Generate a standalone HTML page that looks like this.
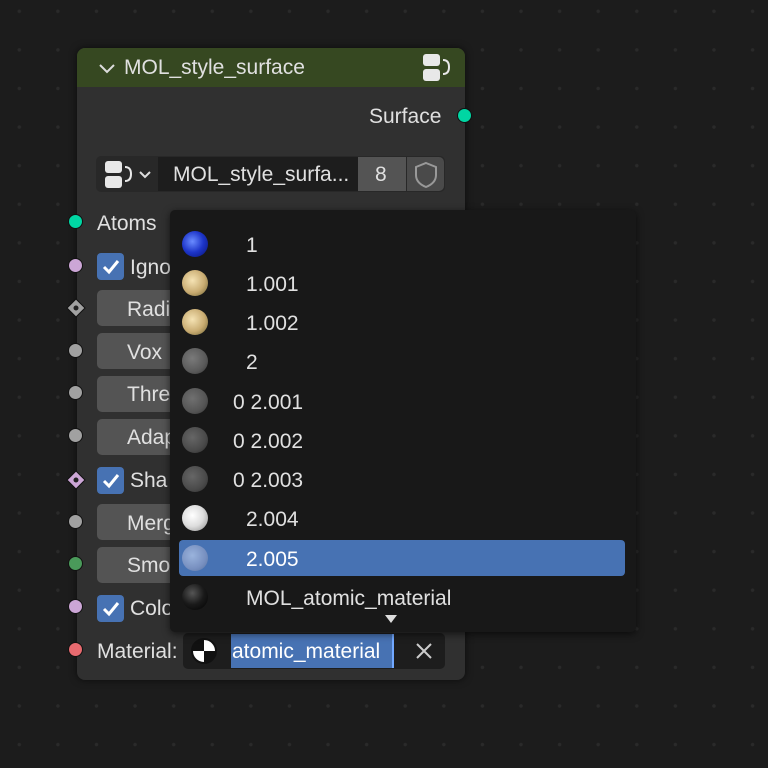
<!DOCTYPE html>
<html><head><style>
*{margin:0;padding:0;box-sizing:border-box}
body{width:768px;height:768px;overflow:hidden;background:#1c1c1c;font-family:"Liberation Sans","DejaVu Sans",sans-serif;color:#e0e0e0;position:relative;
background-image:radial-gradient(circle,#2a2a2a 1.5px,transparent 2px);background-size:38.6px 38.6px;background-position:0px -8px}
.abs{position:absolute}
.node{left:77px;top:48px;width:388px;height:632px;background:#303030;border-radius:8px;box-shadow:0 0 8px rgba(0,0,0,.6)}
.hdr{left:77px;top:48px;width:388px;height:39px;background:#364821;border-radius:8px 8px 0 0}
.t{font-size:21px;white-space:nowrap;margin-top:1px}
.sock{width:15px;height:15px;border-radius:50%;border:1px solid #111}
.btn{left:97px;width:90px;height:36px;background:#545454;border-radius:5px}
.cb{left:97px;width:27px;height:27px;background:#4772b3;border-radius:4px}
.pop{left:170px;top:210px;width:466px;height:422px;background:#181818;border-radius:5px;box-shadow:0 2px 8px rgba(0,0,0,.6)}
.sp{width:26px;height:26px;border-radius:50%;left:182px}
</style></head><body>
<div class="abs node"></div>
<div class="abs hdr"></div>
<svg class="abs" style="left:97px;top:58px" width="20" height="20"><path d="M3 7l7 7 7-7" stroke="#ddd" stroke-width="2" fill="none"/></svg>
<div class="abs t" style="left:124px;top:55px">MOL_style_surface</div>
<svg class="abs" style="left:420px;top:52px" width="34" height="32"><rect x="3" y="2" width="17" height="12" rx="3" fill="#e8e8e8"/><rect x="3" y="17" width="17" height="12" rx="3" fill="#e8e8e8"/><path d="M23 8q6 0 6 7t-6 7" stroke="#e8e8e8" stroke-width="2" fill="none"/></svg>
<div class="abs t" style="left:369px;top:104px">Surface</div>
<div class="abs sock" style="left:457px;top:108px;background:#00d6a3"></div>
<div class="abs" style="left:96px;top:156px;width:349px;height:36px;background:#282828;border-radius:5px"></div>
<div class="abs" style="left:158px;top:157px;width:200px;height:34px;background:#1d1d1d"></div>
<div class="abs" style="left:358px;top:157px;width:48px;height:34px;background:#545454"></div>
<div class="abs" style="left:407px;top:157px;width:37px;height:34px;background:#4a4a4a;border-radius:0 5px 5px 0"></div>
<svg class="abs" style="left:102px;top:159px" width="56" height="32"><rect x="3" y="2" width="17" height="12" rx="3" fill="#e8e8e8"/><rect x="3" y="17" width="17" height="12" rx="3" fill="#e8e8e8"/><path d="M23 8q6 0 6 7t-6 7" stroke="#e8e8e8" stroke-width="2" fill="none"/><path d="M38 13l5 5 5-5" stroke="#ddd" stroke-width="2" fill="none"/></svg>
<div class="abs t" style="left:173px;top:162px">MOL_style_surfa...</div>
<div class="abs t" style="left:375px;top:162px">8</div>
<svg class="abs" style="left:412px;top:160px" width="28" height="30"><path d="M14 3l10 4v8q0 8-10 12q-10-4-10-12V7z" stroke="#999" stroke-width="2" fill="none"/></svg>
<div class="abs sock" style="left:68px;top:214px;background:#00d6a3"></div>
<div class="abs t" style="left:97px;top:211px">Atoms</div>
<div class="abs sock" style="left:68px;top:258px;background:#cca6d6"></div>
<div class="abs cb" style="top:253px"></div><div class="abs t" style="left:130px;top:255px">Igno</div>
<svg class="abs" style="left:66px;top:298px" width="20" height="20"><path d="M10 1l9 9-9 9-9-9z" fill="#a1a1a1" stroke="#111"/><circle cx="10" cy="10" r="2.5" fill="#222"/></svg>
<div class="abs btn" style="top:290px"></div><div class="abs t" style="left:127px;top:297px">Radi</div>
<div class="abs sock" style="left:68px;top:343px;background:#a1a1a1"></div>
<div class="abs btn" style="top:333px"></div><div class="abs t" style="left:127px;top:340px">Vox</div>
<div class="abs sock" style="left:68px;top:385px;background:#a1a1a1"></div>
<div class="abs btn" style="top:376px"></div><div class="abs t" style="left:127px;top:382px">Thre</div>
<div class="abs sock" style="left:68px;top:428px;background:#a1a1a1"></div>
<div class="abs btn" style="top:419px"></div><div class="abs t" style="left:127px;top:425px">Adap</div>
<svg class="abs" style="left:66px;top:470px" width="20" height="20"><path d="M10 1l9 9-9 9-9-9z" fill="#cca6d6" stroke="#111"/><circle cx="10" cy="10" r="2.5" fill="#222"/></svg>
<div class="abs cb" style="top:467px"></div><div class="abs t" style="left:130px;top:468px">Sha</div>
<div class="abs sock" style="left:68px;top:514px;background:#a1a1a1"></div>
<div class="abs btn" style="top:504px"></div><div class="abs t" style="left:127px;top:511px">Merg</div>
<div class="abs sock" style="left:68px;top:556px;background:#4a9a5a"></div>
<div class="abs btn" style="top:547px"></div><div class="abs t" style="left:127px;top:553px">Smo</div>
<div class="abs sock" style="left:68px;top:599px;background:#cca6d6"></div>
<div class="abs cb" style="top:595px"></div><div class="abs t" style="left:130px;top:596px">Colo</div>
<svg class="abs" style="left:97px;top:253px" width="27" height="27"><path d="M7 14l5 5 9-11" stroke="#fff" stroke-width="3" fill="none"/></svg>
<svg class="abs" style="left:97px;top:467px" width="27" height="27"><path d="M7 14l5 5 9-11" stroke="#fff" stroke-width="3" fill="none"/></svg>
<svg class="abs" style="left:97px;top:595px" width="27" height="27"><path d="M7 14l5 5 9-11" stroke="#fff" stroke-width="3" fill="none"/></svg>
<div class="abs sock" style="left:68px;top:642px;background:#e86a6f"></div>
<div class="abs t" style="left:97px;top:639px">Material:</div>
<div class="abs" style="left:183px;top:633px;width:262px;height:36px;background:#1d1d1d;border-radius:5px"></div>
<div class="abs" style="left:231px;top:634px;width:162px;height:34px;background:#4772b3"></div>
<div class="abs" style="left:392px;top:634px;width:2px;height:34px;background:#71a8ff"></div>
<svg class="abs" style="left:189px;top:636px" width="30" height="30"><circle cx="15" cy="15" r="12" fill="#fff" stroke="#111" stroke-width="2"/><path d="M15 3a12 12 0 0 0-12 12h12z M15 15v12a12 12 0 0 0 12-12z" fill="#111"/></svg>
<div class="abs t" style="left:232px;top:639px;color:#fff">atomic_material</div>
<svg class="abs" style="left:414px;top:641px" width="20" height="20"><path d="M3 3l14 14M17 3L3 17" stroke="#ccc" stroke-width="2"/></svg>
<div class="abs pop"></div>
<div class="abs" style="left:179px;top:540px;width:446px;height:36px;background:#4772b3;border-radius:4px"></div>
<div class="abs sp" style="top:231px;background:radial-gradient(circle at 40% 40%,#6a8cff,#1d35c9 50%,#061270)"></div>
<div class="abs t" style="left:246px;top:233px">1</div>
<div class="abs sp" style="top:270px;background:radial-gradient(circle at 40% 40%,#f5e3b4,#c9ac72 55%,#6a6030)"></div>
<div class="abs t" style="left:246px;top:272px">1.001</div>
<div class="abs sp" style="top:309px;background:radial-gradient(circle at 40% 40%,#f5e3b4,#c9ac72 55%,#6a6030)"></div>
<div class="abs t" style="left:246px;top:311px">1.002</div>
<div class="abs sp" style="top:348px;background:radial-gradient(circle at 40% 40%,#7a7a7a,#5a5a5a 60%,#333)"></div>
<div class="abs t" style="left:246px;top:350px">2</div>
<div class="abs sp" style="top:388px;background:radial-gradient(circle at 40% 40%,#707070,#555 60%,#333)"></div>
<div class="abs t" style="left:233px;top:390px">0 2.001</div>
<div class="abs sp" style="top:427px;background:radial-gradient(circle at 40% 40%,#666,#4a4a4a 60%,#2a2a2a)"></div>
<div class="abs t" style="left:233px;top:429px">0 2.002</div>
<div class="abs sp" style="top:466px;background:radial-gradient(circle at 40% 40%,#666,#4a4a4a 60%,#2a2a2a)"></div>
<div class="abs t" style="left:233px;top:468px">0 2.003</div>
<div class="abs sp" style="top:505px;background:radial-gradient(circle at 40% 40%,#fff,#ddd 50%,#888)"></div>
<div class="abs t" style="left:246px;top:507px">2.004</div>
<div class="abs sp" style="top:545px;background:radial-gradient(circle at 40% 40%,#9ab3dc,#7890c0 60%,#56709e)"></div>
<div class="abs t" style="left:246px;top:547px;color:#fff">2.005</div>
<div class="abs sp" style="top:584px;background:radial-gradient(circle at 40% 35%,#555,#1a1a1a 50%,#000)"></div>
<div class="abs t" style="left:246px;top:586px">MOL_atomic_material</div>
<svg class="abs" style="left:384px;top:614px" width="14" height="10"><path d="M1 1h12l-6 8z" fill="#ddd"/></svg>
</body></html>
